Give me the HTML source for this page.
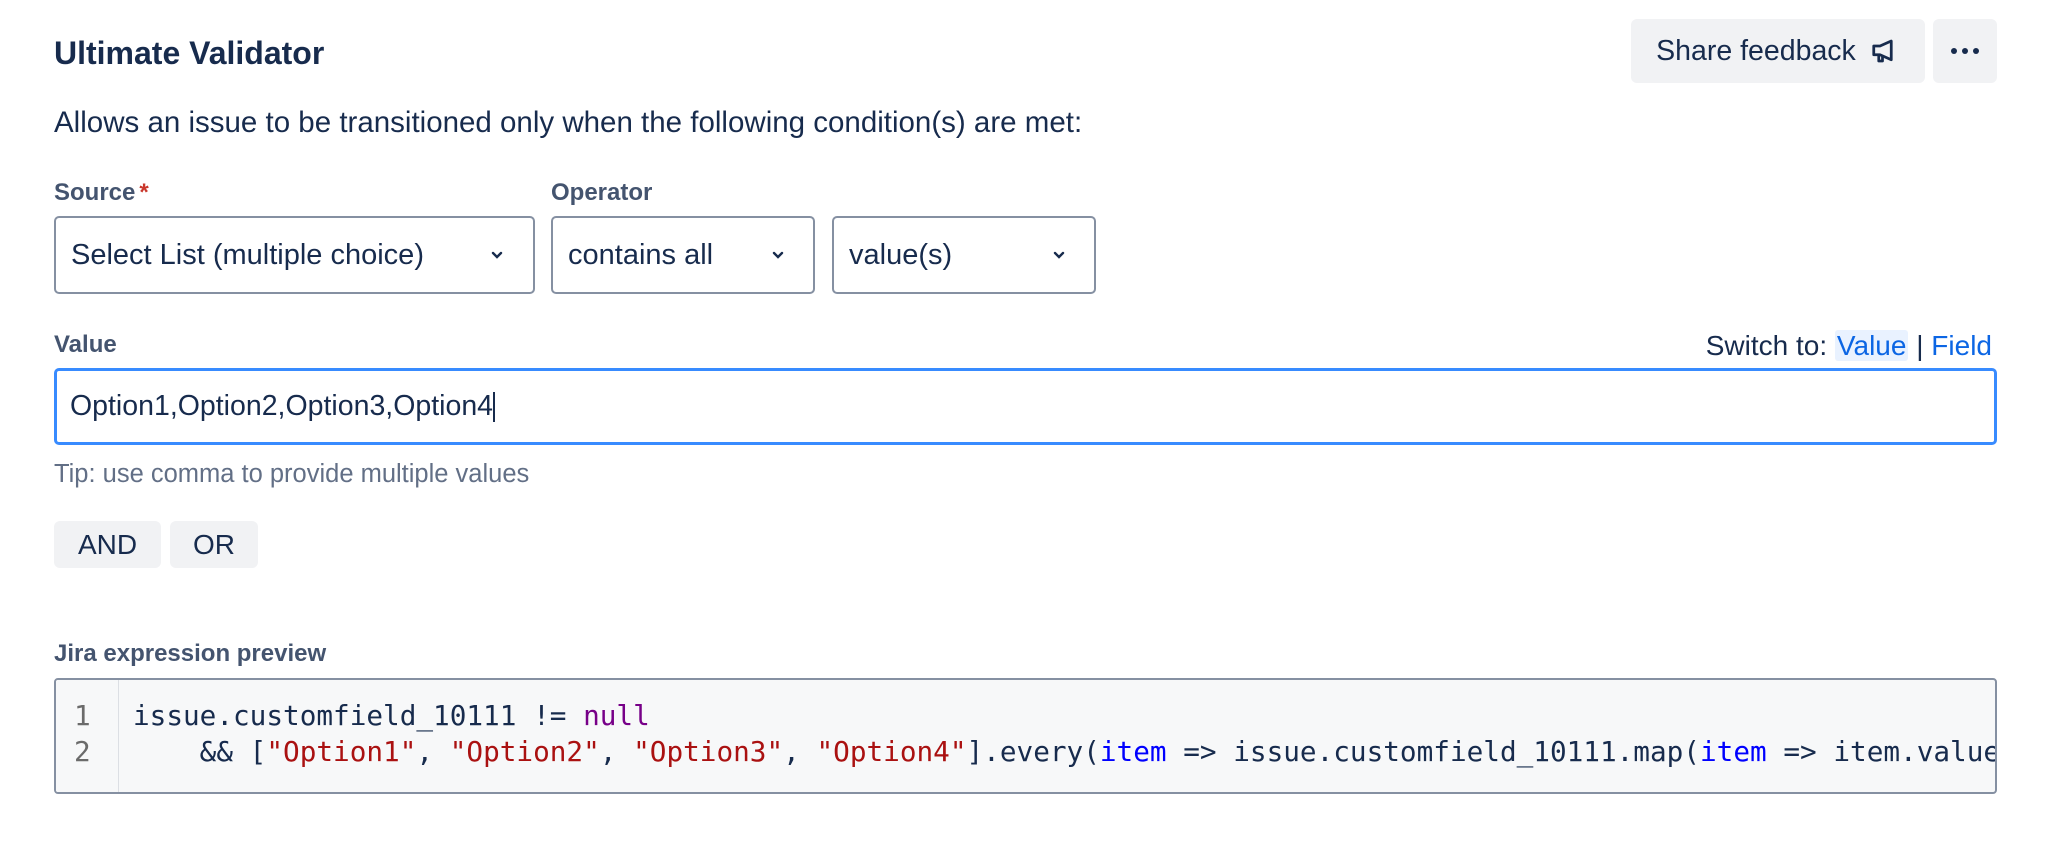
<!DOCTYPE html>
<html><head><meta charset="utf-8"><style>
*{box-sizing:border-box;margin:0;padding:0}
body{width:2060px;height:846px;background:#fff;font-family:"Liberation Sans",sans-serif;color:#172b4d;position:relative;overflow:hidden}
.a{position:absolute;white-space:nowrap}
.title{left:54px;top:34px;font-size:32px;font-weight:bold;line-height:38px}
.desc{left:54px;top:106px;font-size:29.5px;line-height:34px}
.lbl{font-size:24px;font-weight:bold;color:#44546f;line-height:28px}
.sel{border:2px solid #8590a2;border-radius:5px;height:78px;font-size:29px;display:flex;align-items:center;padding-left:15px}
.chev{position:absolute;top:30px;width:14px;height:14px}
.btn{background:#f1f2f4;border-radius:6px;display:flex;align-items:center;justify-content:center}
.code{font-family:"DejaVu Sans Mono","Liberation Mono",monospace;font-size:27.7px;line-height:36px;white-space:pre}
</style></head><body>
<div class="a title">Ultimate Validator</div>
<div class="a btn" style="left:1631px;top:19px;width:294px;height:64px;font-size:28.5px;">Share feedback
<svg width="30" height="30" viewBox="0 0 24 24" style="margin-left:14px" fill="none" stroke="#172b4d" stroke-width="2.2" stroke-linejoin="round"><path d="M3 8h5l9-4v15l-9-4H3z M7 15v5h3v-4.5"/></svg></div>
<div class="a btn" style="left:1933px;top:19px;width:64px;height:64px;">
<svg width="30" height="8" viewBox="0 0 30 8"><circle cx="4" cy="4" r="3" fill="#172b4d"/><circle cx="15" cy="4" r="3" fill="#172b4d"/><circle cx="26" cy="4" r="3" fill="#172b4d"/></svg></div>
<div class="a desc">Allows an issue to be transitioned only when the following condition(s) are met:</div>
<div class="a lbl" style="left:54px;top:179px">Source<span style="color:#c9372c;margin-left:4px">*</span></div>
<div class="a lbl" style="left:551px;top:179px">Operator</div>
<div class="a sel" style="left:54px;top:216px;width:481px">Select List (multiple choice)<svg class="chev" style="left:434px" viewBox="0 0 14 14"><path d="M3 5l4 4 4-4" stroke="#172b4d" stroke-width="2.4" fill="none" stroke-linecap="round"/></svg></div>
<div class="a sel" style="left:551px;top:216px;width:264px">contains all<svg class="chev" style="left:218px" viewBox="0 0 14 14"><path d="M3 5l4 4 4-4" stroke="#172b4d" stroke-width="2.4" fill="none" stroke-linecap="round"/></svg></div>
<div class="a sel" style="left:832px;top:216px;width:264px">value(s)<svg class="chev" style="left:218px" viewBox="0 0 14 14"><path d="M3 5l4 4 4-4" stroke="#172b4d" stroke-width="2.4" fill="none" stroke-linecap="round"/></svg></div>
<div class="a lbl" style="left:54px;top:331px">Value</div>
<div class="a" style="right:68px;top:330px;font-size:28px;line-height:32px">Switch to: <span style="color:#0c66e4;background:#e9f2ff;border-radius:3px;padding:0 2px">Value</span> | <span style="color:#0c66e4">Field</span></div>
<div class="a" style="left:54px;top:368px;width:1943px;height:77px;border:3px solid #388bff;border-radius:5px;font-size:28.5px;padding-left:13px;display:flex;align-items:center">Option1,Option2,Option3,Option4<span style="display:inline-block;width:2px;height:30px;background:#172b4d"></span></div>
<div class="a" style="left:54px;top:460px;font-size:25.5px;color:#626f86;line-height:28px">Tip: use comma to provide multiple values</div>
<div class="a btn" style="left:54px;top:521px;width:107px;height:47px;font-size:28px">AND</div>
<div class="a btn" style="left:170px;top:521px;width:88px;height:47px;font-size:28px">OR</div>
<div class="a lbl" style="left:54px;top:640px">Jira expression preview</div>
<div class="a" style="left:54px;top:678px;width:1943px;height:116px;border:2px solid #8590a2;border-radius:4px;background:#f7f8f9;overflow:hidden">
<div style="position:absolute;left:0;top:0;width:63px;height:100%;border-right:1px solid #dcdfe4;background:#f7f8f9"></div>
<div class="a code" style="left:18px;top:18px;color:#6b6b6b">1
2</div>
<div class="a code" style="left:77px;top:18px;color:#172b4d">issue.customfield_10111 != <span style="color:#770088">null</span>
    &amp;&amp; [<span style="color:#aa1111">"Option1"</span>, <span style="color:#aa1111">"Option2"</span>, <span style="color:#aa1111">"Option3"</span>, <span style="color:#aa1111">"Option4"</span>].every(<span style="color:#0000ff">item</span> =&gt; issue.customfield_10111.map(<span style="color:#0000ff">item</span> =&gt; item.value).includes(<span style="color:#0000ff">item</span>))</div>
</div>
</body></html>
